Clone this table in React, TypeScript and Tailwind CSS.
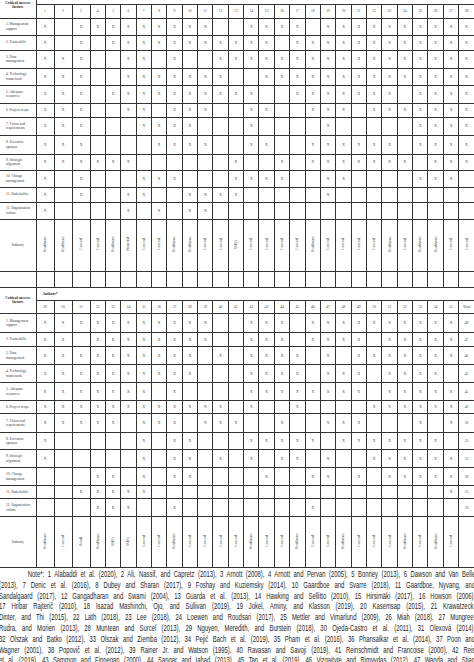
import React from "react";

const range = (a: number, b: number) => Array.from({ length: b - a + 1 }, (_, i) => a + i);

const labels: string[][] = [
  ["1. Management", "support"],
  ["2. Team skills"],
  ["3. Data", "management"],
  ["4. Technology", "framework"],
  ["5. Adequate", "resources"],
  ["6. Project scope"],
  ["7. Vision and", "requirements"],
  ["8. Executive", "sponsor"],
  ["9. Strategic", "alignment"],
  ["10. Change", "management"],
  ["11. Stakeholder"],
  ["12. Organization", "culture"],
];

// which author columns have an X, per success factor
const marks1: number[][] = [
  [1, 3, 4, 5, 6, 7, 8, 9, 10, 11, 14, 15, 16, 17, ...range(19, 28)],
  [1, 3, ...range(5, 15), ...range(17, 28)],
  [1, 2, 3, 6, 7, 9, 12, 13, ...range(14, 28)],
  [1, 2, 3, ...range(6, 12), ...range(15, 28)],
  [1, 2, 3, ...range(5, 14), ...range(17, 23), 25, 26, 27, 28],
  [1, 2, 3, 6, 7, 9, 10, 11, 14, 15, 18, 19, 20, ...range(22, 28)],
  [1, 2, 3, 7, 8, 9, 10, 14, 19, 25, 26, 27, 28],
  [1, 2, 3, 8, 9, 10, 11, 14, 15, ...range(18, 23), 25, 26, 27, 28],
  [1, 2, 3, 4, 5, 6, 13, 16, ...range(18, 24), 26, 27, 28],
  [1, 3, 7, 8, 9, 13, 14, 15, 16, 19, 20, 25, 26, 27],
  [1, 3, 6, 7, 10, 11, 12, 13, 19],
  [1, 6, 8, 10, 11],
];

const marks2: number[][] = [
  [...range(29, 39), 42, 43, 44, ...range(46, 55)],
  [29, 30, ...range(32, 39), 42, 43, 44, 46, 47, 48, 49, ...range(51, 55)],
  [...range(29, 38), 40, 42, 43, 44, 45, 47, ...range(49, 55)],
  [...range(29, 38), 42, 43, 44, 45, 47, 48, 49, 51, 52, 53, 54],
  [...range(29, 35), 37, ...range(42, 49), ...range(51, 55)],
  [...range(29, 40), 42, 45, ...range(50, 55)],
  [...range(29, 33), 35, 36, 37, 39, 40, 41, 44, 47, 48, 49, 53, 55],
  [29, 35, 37, 38, ...range(42, 46), ...range(48, 54)],
  [29, 35, 37, 38, 40, 42, 44, 45, 47, ...range(50, 55)],
  [32, 33, 35, 37, 38, 43, 46, 47, 49, ...range(51, 55)],
  [...range(31, 35), 55],
  [32, 33, 34, 37, 46],
];

const H = "Healthcare";
const G = "General";
const industry1 = [H, H, G, G, H, "Financial", G, G, H, H, G, G, "SMEs", G, G, G, G, H, G, G, G, G, H, G, H, H, G, G];
const industry2 = [H, G, "Retail", H, "SMEs", "SMEs", G, G, H, G, G, G, G, H, G, G, H, G, G, H, G, G, G, H, G, H, G, ""];

const heights1 = ["h-[17px]", "h-[15px]", "h-[18px]", "h-[17px]", "h-[18px]", "h-[14px]", "h-[18px]", "h-[19px]", "h-[16px]", "h-[17px]", "h-[15px]", "h-[17px]"];
const heights2 = ["h-[19px]", "h-[14px]", "h-[18px]", "h-[18px]", "h-[18px]", "h-[13px]", "h-[19px]", "h-[17px]", "h-[18px]", "h-[18px]", "h-[13px]", "h-[18px]"];

const totals = marks1.map((m, i) => m.length + marks2[i].length);

const line = "border-[#333]";
const cell = `border-r border-b ${line} p-0 text-center align-middle last:border-r-0`;
const labelCell = `border-r border-b ${line} p-0 pl-[6px] text-left align-middle`;

const noteLines = [
  "Note*: 1 Alabaddi et al. (2020), 2 Ali, Nassif, and Capretz (2013), 3 Arnott (2008), 4 Arnott and Pervan (2005), 5 Bonney (2013), 6 Dawson and Van Belle",
  "(2013), 7 Denic et al. (2016), 8 Dubey and Sharan (2017), 9 Foshay and Kuziemsky (2014), 10 Gaardboe and Svarre (2018), 11 Gaardboe, Nyvang, and",
  "Sandalgaard (2017), 12 Gangadharan and Swami (2004), 13 Guarda et al. (2013), 14 Hawking and Sellitto (2010), 15 Hirsimäki (2017), 16 Howson (2006),",
  "17 Hribar Rajterič (2010), 18 Isazad Mashinchi, Ojo, and Sullivan (2019), 19 Jokel, Aminy, and Klasson (2019), 20 Kasemsap (2015), 21 Krawatzeck,",
  "Dinter, and Thi (2015), 22 Lath (2018), 23 Lee (2018), 24 Loewen and Roudsari (2017), 25 Mettler and Vimarlund (2009), 26 Miah (2018), 27 Mungree,",
  "Rudra, and Morien (2013), 28 Muntean and Surcel (2013), 29 Nguyen, Meredith, and Burstein (2018), 30 Ojeda-Castro et al. (2011), 31 Olexová (2014),",
  "32 Olszak and Batko (2012), 33 Olszak and Ziemba (2012), 34 Pejić Bach et al. (2019), 35 Pham et al. (2016), 36 Phansalkar et al. (2014), 37 Poon and",
  "Wagner (2001), 38 Popovič et al. (2012), 39 Rainer Jr. and Watson (1995), 40 Ravasan and Savoji (2019), 41 Reinschmidt and Francoise (2000), 42 Reis",
  "et al. (2019), 43 Sammon and Finnegan (2000), 44 Sangar and Iahad (2013), 45 Tan et al. (2019), 46 Vizgaitytė and Rimvydas (2012), 47 Wanda and Stian",
];

const Cols = () => (
  <colgroup>
    <col className="w-[36px]" />
    <col className="w-[18px]" />
    <col className="w-[18px]" />
    <col className="w-[18px]" />
    {range(4, 28).map((c) => (
      <col key={c} />
    ))}
  </colgroup>
);

const Label: React.FC<{ lines: string[] }> = ({ lines }) => (
  <div className="whitespace-nowrap text-[3.6px] leading-[4.4px] text-[#3a3a3a]">
    {lines.map((l) => (
      <div key={l}>{l}</div>
    ))}
  </div>
);

const Vertical: React.FC<{ text: string }> = ({ text }) => (
  <span className="inline-block rotate-180 text-[3.8px] leading-[4px] text-[#4a4a4a] [writing-mode:vertical-rl]">
    {text}
  </span>
);

const Mark: React.FC<{ children: React.ReactNode }> = ({ children }) => (
  <span className="text-[3.6px] leading-[4px] text-[#444]">{children}</span>
);

const FirstTable = () => {
  const nums = range(1, 28);
  return (
    <table className="w-[474px] table-fixed border-collapse text-[4px] leading-[4px]">
      <Cols />
      <tbody>
        <tr className="h-[4px]">
          <td rowSpan={2} className={`${labelCell} !pl-0 !text-center !align-top pt-[1px]`}>
            <div className="text-[3.8px] font-bold leading-[4px] text-[#222]">
              Critical success
              <br />
              factors
            </div>
          </td>
          <td colSpan={28} className={`border-b ${line} p-0`} />
        </tr>
        <tr className="h-[14px]">
          {nums.map((n) => (
            <td key={n} className={cell}>
              <Mark>{n}</Mark>
            </td>
          ))}
        </tr>
        {labels.map((lab, i) => (
          <tr key={i} className={heights1[i]}>
            <td className={labelCell}>
              <Label lines={lab} />
            </td>
            {nums.map((n) => (
              <td key={n} className={cell}>
                <Mark>{marks1[i].includes(n) ? "X" : ""}</Mark>
              </td>
            ))}
          </tr>
        ))}
        <tr className="h-[52px]">
          <td className={`${labelCell} !pl-0 !text-center`}>
            <Label lines={["Industry"]} />
          </td>
          {industry1.map((t, i) => (
            <td key={i} className={cell}>
              <Vertical text={t} />
            </td>
          ))}
        </tr>
        <tr className="h-[16px]">
          <td className={labelCell} />
          {nums.map((n) => (
            <td key={n} className={cell} />
          ))}
        </tr>
      </tbody>
    </table>
  );
};

const SecondTable = () => {
  const nums = range(29, 55);
  return (
    <table className="w-[474px] table-fixed border-collapse text-[4px] leading-[4px]">
      <Cols />
      <tbody>
        <tr className="h-[13px]">
          <td rowSpan={2} className={`${labelCell} !pl-0 !text-center`}>
            <div className="text-[3.8px] font-bold leading-[4.6px] text-[#222]">
              Critical success
              <br />
              factors
            </div>
          </td>
          <td colSpan={28} className={`border-b ${line} p-0 pl-[6px] text-left align-middle`}>
            <span className="text-[3.8px] font-bold leading-[4px] text-[#222]">Authors*</span>
          </td>
        </tr>
        <tr className="h-[13px]">
          {[...nums.map(String), "Total"].map((n) => (
            <td key={n} className={cell}>
              <Mark>{n}</Mark>
            </td>
          ))}
        </tr>
        {labels.map((lab, i) => (
          <tr key={i} className={heights2[i]}>
            <td className={labelCell}>
              <Label lines={lab} />
            </td>
            {nums.map((n) => (
              <td key={n} className={cell}>
                <Mark>{marks2[i].includes(n) ? "X" : ""}</Mark>
              </td>
            ))}
            <td className={cell}>
              <Mark>{totals[i]}</Mark>
            </td>
          </tr>
        ))}
        <tr className="h-[51px]">
          <td className={`${labelCell} !pl-0 !text-center`}>
            <Label lines={["Industry"]} />
          </td>
          {industry2.map((t, i) => (
            <td key={i} className={cell}>
              {t && <Vertical text={t} />}
            </td>
          ))}
        </tr>
      </tbody>
    </table>
  );
};

export default function App() {
  return (
    <div className="h-[662px] w-[474px] overflow-hidden bg-white font-['Liberation_Serif',serif]">
      <FirstTable />
      <SecondTable />
      <div className="w-[474px] overflow-hidden pt-[1px]">
        <div className="-ml-[1px] w-[727px] origin-top-left scale-x-[0.655] font-['Liberation_Sans',Arial,sans-serif] text-[9px] leading-[10.8px] text-[#1e1e1e]">
          {noteLines.map((l, i) => (
            <div
              key={i}
              className={`whitespace-nowrap text-justify [text-align-last:justify] ${i === 0 ? "pl-[44px]" : ""}`}
            >
              {l}
            </div>
          ))}
        </div>
      </div>
    </div>
  );
}
